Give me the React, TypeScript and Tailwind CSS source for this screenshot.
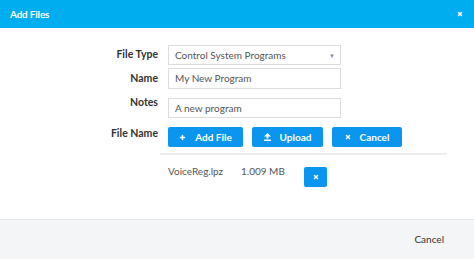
import { Plus, X } from 'lucide-react';

const labelCls = 'w-[158px] shrink-0 text-right text-[10.5px] font-bold text-[#333]';
const inputCls =
  'w-[173px] h-[20px] border border-[#ddd] bg-white px-[6px] text-[10px] text-[#555] flex items-center';
const btnCls =
  'flex h-[20px] items-center justify-center gap-[9px] rounded-[2px] bg-[#0a96ee] text-[10px] font-bold text-white';

function UploadIcon() {
  return (
    <svg width="7" height="8" viewBox="0 0 7 8" fill="white">
      <path d="M3.5 0 L7 3.5 H4.5 V5.5 H2.5 V3.5 H0 Z" />
      <rect x="0" y="6.5" width="7" height="1.5" />
    </svg>
  );
}

export default function App() {
  return (
    <div className="flex h-[259px] w-[474px] flex-col bg-white font-['Lato','Liberation_Sans',sans-serif]">
      {/* Header */}
      <div className="flex h-[28px] shrink-0 items-center justify-between bg-[#00aeef] pl-[10px] pr-[11px]">
        <span className="text-[10px] font-bold tracking-[-0.2px] text-white">Add Files</span>
        <X className="h-[6px] w-[6px] text-white" strokeWidth={6} />
      </div>

      {/* Body */}
      <div className="flex flex-1 flex-col pt-[17px]">
        {/* File Type */}
        <div className="flex items-center gap-[10px]">
          <label className={labelCls}>File Type</label>
          <div className={inputCls + ' justify-between pr-[5px]'}>
            <span>Control System Programs</span>
            <span className="text-[6px] text-[#888]">▼</span>
          </div>
        </div>

        {/* Name */}
        <div className="mt-[3px] flex items-center gap-[10px]">
          <label className={labelCls}>Name</label>
          <div className={inputCls + ' h-[21px]'}>My New Program</div>
        </div>

        {/* Notes */}
        <div className="mt-[9px] flex items-start gap-[10px]">
          <label className={labelCls + ' -mt-[3px]'}>Notes</label>
          <div className={inputCls}>A new program</div>
        </div>

        {/* File Name */}
        <div className="mt-[9px] flex items-start gap-[10px]">
          <label className={labelCls + ' -mt-[1px]'}>File Name</label>
          <div className="flex gap-[9px]">
            <button className={btnCls + ' w-[75px]'}>
              <Plus className="h-[7px] w-[7px]" strokeWidth={5} />
              Add File
            </button>
            <button className={btnCls + ' w-[71px]'}>
              <UploadIcon />
              Upload
            </button>
            <button className={btnCls + ' w-[70px]'}>
              <X className="h-[6px] w-[6px]" strokeWidth={6} />
              Cancel
            </button>
          </div>
        </div>

        {/* Uploaded files */}
        <div className="ml-[160px] mr-[27px] mt-[6px] border-t-2 border-[#eee] pt-[9px]">
          <div className="flex items-start pl-[8px]">
            <span className="w-[73px] text-[10px] text-[#555]">VoiceReg.lpz</span>
            <span className="w-[63px] text-[10px] text-[#555]">1.009 MB</span>
            <button className="mt-[3px] flex h-[20px] w-[23px] items-center justify-center rounded-[2px] bg-[#0a96ee] text-white">
              <X className="h-[6px] w-[6px]" strokeWidth={6} />
            </button>
          </div>
        </div>
      </div>

      {/* Footer */}
      <div className="flex h-[40px] shrink-0 items-center justify-end border-t border-[#e8e9eb] bg-[#f4f5f7] pr-[30px]">
        <button className="text-[10px] text-[#333]">Cancel</button>
      </div>
    </div>
  );
}
